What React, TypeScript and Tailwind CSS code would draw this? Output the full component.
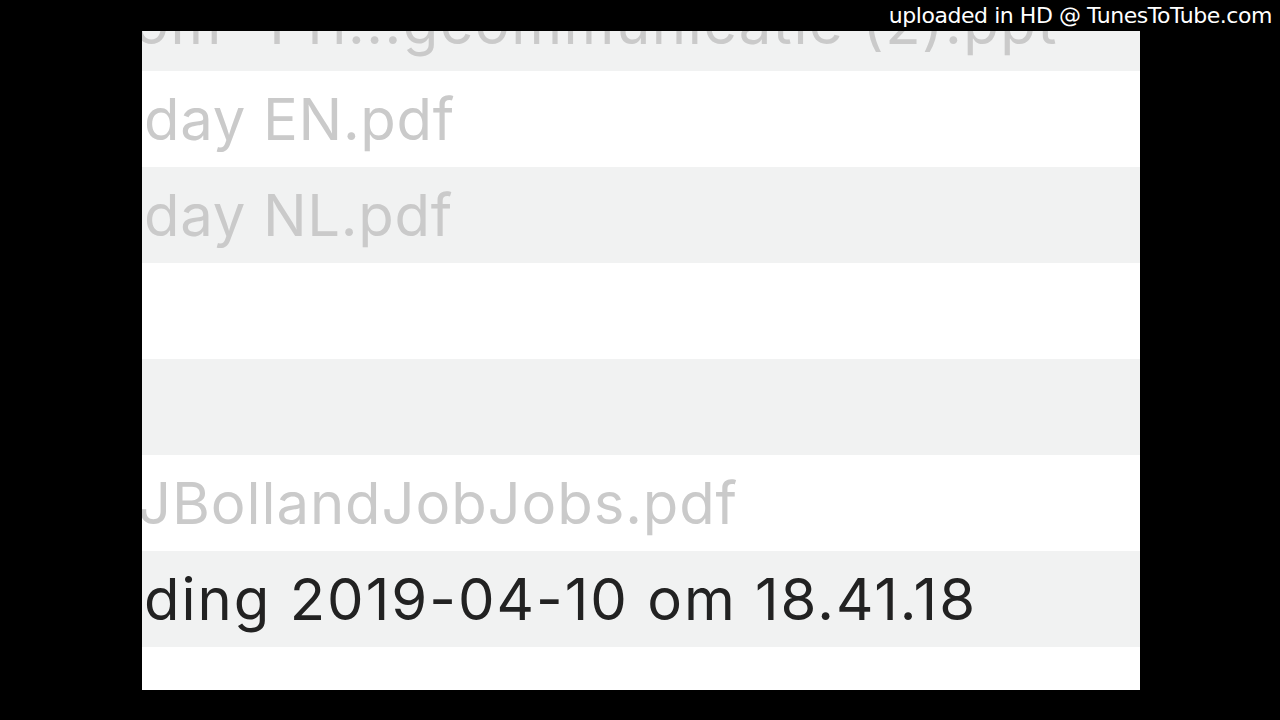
import React from 'react'

type FileRow = { name: string; shift: string; track: string; dark?: boolean }

const rows: FileRow[] = [
  { name: 'om "Pri...gcommunicatie (2).ppt', shift: 'ml-[-8px]', track: 'tracking-[1.6px]' },
  { name: 'day EN.pdf', shift: 'ml-[2px]', track: 'tracking-[0.7px]' },
  { name: 'day NL.pdf', shift: 'ml-[2px]', track: 'tracking-[0.7px]' },
  { name: '', shift: '', track: '' },
  { name: '', shift: '', track: '' },
  { name: 'JBollandJobJobs.pdf', shift: 'ml-[-4px]', track: 'tracking-[0.9px]' },
  { name: 'ding 2019-04-10 om 18.41.18', shift: 'ml-[2px]', track: 'tracking-[2px]', dark: true },
  { name: '', shift: '', track: '' },
]

export default function App() {
  return (
    <div className="w-[1280px] h-[720px] bg-black flex flex-col overflow-hidden">
      <div className="h-[31px] flex items-center justify-end pr-[8px] text-white text-[22px] leading-none font-['DejaVu_Sans',sans-serif] tracking-[-0.45px]">
        uploaded in HD @ TunesToTube.com
      </div>
      <div className="ml-[142px] w-[998px] h-[659px] bg-white overflow-hidden">
        <ul className="-mt-[56px] flex flex-col">
          {rows.map((row, i) => (
            <li
              key={i}
              className={`h-[96px] shrink-0 flex items-center overflow-hidden whitespace-nowrap font-['Inter',sans-serif] text-[58px] leading-none ${
                i % 2 === 0 ? 'bg-[#f1f2f2]' : 'bg-white'
              } ${row.dark ? 'text-[#222222]' : 'text-[#cacaca]'}`}
            >
              <span className={`${row.shift} ${row.track}`}>{row.name}</span>
            </li>
          ))}
        </ul>
      </div>
    </div>
  )
}
